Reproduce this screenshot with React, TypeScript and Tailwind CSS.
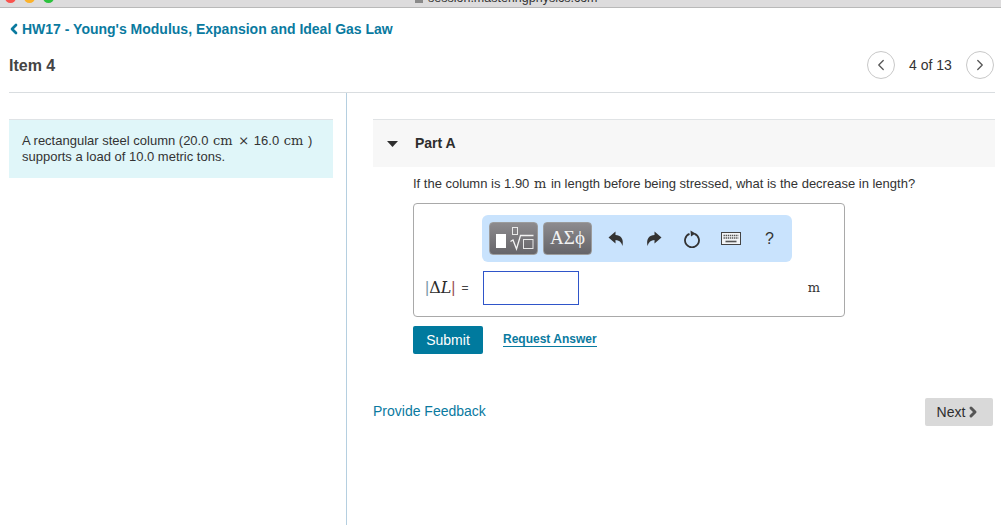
import { ChevronLeft, ChevronRight } from 'lucide-react'

const sans = { fontFamily: '"Liberation Sans", Arial, sans-serif' }

function Tex({ children }: { children: React.ReactNode }) {
    return <span className="font-['DejaVu_Serif',serif] text-[13px] mx-[1px]">{children}</span>
}

function MathTemplateIcon() {
    return (
        <svg width="49" height="33" viewBox="0 0 49 33" fill="none">
            <rect x="7" y="12" width="10" height="14" fill="#fff" />
            <rect x="23.5" y="5.5" width="5" height="7" stroke="#e8e8e8" strokeWidth="1" />
            <path d="M21.5 19.5 L24 18 L27.5 27 L31.5 13.5 H44.5" stroke="#f2f2f2" strokeWidth="1.3" />
            <rect x="34.5" y="17.5" width="9.5" height="9" stroke="#e8e8e8" strokeWidth="1" />
        </svg>
    )
}

function UndoIcon({ flip }: { flip?: boolean }) {
    return (
        <svg width="16" height="16" viewBox="0 0 16 16" className={flip ? '-scale-x-100' : ''}>
            <path d="M0.5 6.5 L7.5 0.5 V4 C12.5 4 16 7.5 14.5 15 C13.5 11 11 9 7.5 9 V12.5 Z" fill="#333" />
        </svg>
    )
}

function ResetIcon() {
    return (
        <svg width="18" height="18" viewBox="0 0 18 18" fill="none">
            <path d="M6.5 3.8 A7 7 0 1 0 11.5 3.8" stroke="#333" strokeWidth="1.8" />
            <path d="M7.5 0.5 L12.5 3.6 L8 6.5 Z" fill="#333" />
        </svg>
    )
}

function KeyboardIcon() {
    return (
        <svg width="20" height="13" viewBox="0 0 20 13" fill="none">
            <rect x="0.5" y="0.5" width="19" height="12" fill="#f2f4f6" stroke="#444" />
            <path d="M2.5 3.5 H17.5 M2.5 6 H17.5" stroke="#555" strokeWidth="1.4" strokeDasharray="1.4 0.7" />
            <path d="M4.5 9.5 H15.5" stroke="#555" strokeWidth="1.6" />
        </svg>
    )
}

export default function App() {
    return (
        <div className="w-[1001px] h-[525px] overflow-hidden bg-white text-[#333]" style={sans}>
            <div className="h-[8px] bg-[#dddcdd] border-b border-[#b9b9b9] flex items-end overflow-hidden relative">
                <div className="flex gap-[8px] pl-[5px] absolute -top-[8px] left-0">
                    <span className="w-[11px] h-[11px] rounded-full bg-[#f9534e]" />
                    <span className="w-[11px] h-[11px] rounded-full bg-[#fbb22c]" />
                    <span className="w-[11px] h-[11px] rounded-full bg-[#2cc23f]" />
                </div>
                <span className="absolute left-[415px] top-0 w-[8px] h-[3px] bg-[#8a8a8a]" />
                <span className="absolute left-[428px] -top-[9px] text-[12.5px] leading-[14px] text-[#333] whitespace-nowrap">
                    session.masteringphysics.com
                </span>
            </div>

            <div className="pl-[9px] pr-[6px]">
                <div className="flex items-center h-[22px] mt-[10px] text-[14px] font-bold text-[#0a7a9f]">
                    <ChevronLeft className="w-[16px] h-[16px] -ml-[3px]" strokeWidth={4} />
                    <span>HW17 - Young's Modulus, Expansion and Ideal Gas Law</span>
                </div>
                <div className="flex items-center justify-between h-[28px] mt-[11px]">
                    <span className="text-[16px] font-bold text-[#444] mt-[1px]">Item 4</span>
                    <div className="flex items-center text-[14px] text-[#333] mr-[1px]">
                        <span className="w-[28px] h-[28px] rounded-full border border-[#c8c8c8] flex items-center justify-center text-[#555]">
                            <ChevronLeft className="w-[18px] h-[18px]" strokeWidth={1.7} />
                        </span>
                        <span className="w-[71px] text-center">4 of 13</span>
                        <span className="w-[28px] h-[28px] rounded-full border border-[#c8c8c8] flex items-center justify-center text-[#555]">
                            <ChevronRight className="w-[18px] h-[18px]" strokeWidth={1.7} />
                        </span>
                    </div>
                </div>
                <div className="h-px bg-[#d9dde0] mt-[13px]" />

                <div className="flex h-[432px]">
                    <div className="w-[337px] pt-[26px] pr-[13px]">
                        <div className="border-t border-[#dfe3e6] bg-[#e0f6f9] h-[59px] pl-[13px] pt-[13px] text-[13px] leading-[16px]">
                            <p>
                                A rectangular steel column (20.0 <Tex>cm</Tex> <Tex>×</Tex> 16.0 <Tex>cm</Tex> )
                            </p>
                            <p>supports a load of 10.0 metric tons.</p>
                        </div>
                    </div>
                    <div className="w-px bg-[#b5cfe0]" />
                    <div className="flex-1 pl-[26px] pt-[26px]">
                        <div className="border-t border-[#e0e3e5] bg-[#f7f7f7] h-[48px] flex items-center">
                            <svg width="11" height="6" viewBox="0 0 11 6" className="ml-[14px]">
                                <path d="M0 0 H11 L5.5 6 Z" fill="#2f2f2f" />
                            </svg>
                            <span className="ml-[17px] text-[14px] font-bold text-[#2d2d2d]">Part A</span>
                        </div>
                        <div className="pl-[40px]">
                            <p className="mt-[8px] text-[13px] leading-[18px]">
                                If the column is 1.90 <Tex>m</Tex> in length before being stressed, what is the decrease in length?
                            </p>
                            <div className="mt-[10px] w-[432px] h-[114px] border border-[#a9a9a9] rounded-[4px] relative">
                                <div className="absolute left-[68px] top-[11px] w-[310px] h-[47px] rounded-[6px] bg-[#c9e3fd] flex items-center pl-[7px]">
                                    <div className="w-[49px] h-[33px] rounded-[4px] bg-gradient-to-b from-[#8d8b8e] to-[#666569] border border-[#9c9c9c] overflow-hidden relative">
                                        <div className="absolute -left-px -top-px">
                                            <MathTemplateIcon />
                                        </div>
                                    </div>
                                    <div className="ml-[5px] w-[49px] h-[33px] rounded-[4px] bg-gradient-to-b from-[#8d8b8e] to-[#666569] border border-[#9c9c9c] flex items-center justify-center text-[#f2f2f2] text-[19px] font-['Liberation_Serif',serif]">
                                        ΑΣϕ
                                    </div>
                                    <div className="ml-[16px] w-[16px] flex justify-center"><UndoIcon /></div>
                                    <div className="ml-[22px] w-[16px] flex justify-center"><UndoIcon flip /></div>
                                    <div className="ml-[21px] w-[18px] flex justify-center"><ResetIcon /></div>
                                    <div className="ml-[20px] w-[20px] flex justify-center"><KeyboardIcon /></div>
                                    <span className="ml-[24px] text-[16px] text-[#333]">?</span>
                                </div>
                                <div className="absolute left-[11px] top-[67px] flex items-center h-[34px] w-[395px]">
                                    <span className="font-['DejaVu_Serif',serif] text-[16px] text-[#2b2b2b] flex items-center">
                                        <span className="text-[#7a9aa8] font-['Liberation_Sans',sans-serif] font-light">|</span>
                                        <span>Δ</span>
                                        <span className="italic">L</span>
                                        <span className="text-[#a0525a] font-['Liberation_Sans',sans-serif] font-light">|</span>
                                    </span>
                                    <span className="ml-[6px] text-[12px] text-[#444]">=</span>
                                    <div className="ml-[14px] w-[96px] h-[34px] border border-[#2f55c9] bg-white" />
                                    <span className="ml-auto text-[13px] font-['DejaVu_Serif',serif] text-[#333]">m</span>
                                </div>
                            </div>
                            <div className="flex items-center mt-[9px]">
                                <button className="w-[70px] h-[28px] rounded-[2px] bg-[#007a9e] text-white text-[14px] font-medium">
                                    Submit
                                </button>
                                <a className="ml-[20px] text-[12px] font-bold text-[#0a7a9f] border-b border-[#0a7a9f] leading-[13px] mt-[-1px]">
                                    Request Answer
                                </a>
                            </div>
                        </div>
                        <div className="flex items-center justify-between mt-[44px]">
                            <span className="text-[14px] text-[#0a7a9f] -mt-[1px]">Provide Feedback</span>
                            <button className="w-[68px] h-[28px] mr-[2px] rounded-[2px] bg-[#d9d9d9] text-[14px] text-[#2d2d2d] flex items-center justify-center">
                                Next
                                <ChevronRight className="w-[16px] h-[16px] text-[#555]" strokeWidth={4.5} />
                            </button>
                        </div>
                    </div>
                </div>
            </div>
        </div>
    )
}
